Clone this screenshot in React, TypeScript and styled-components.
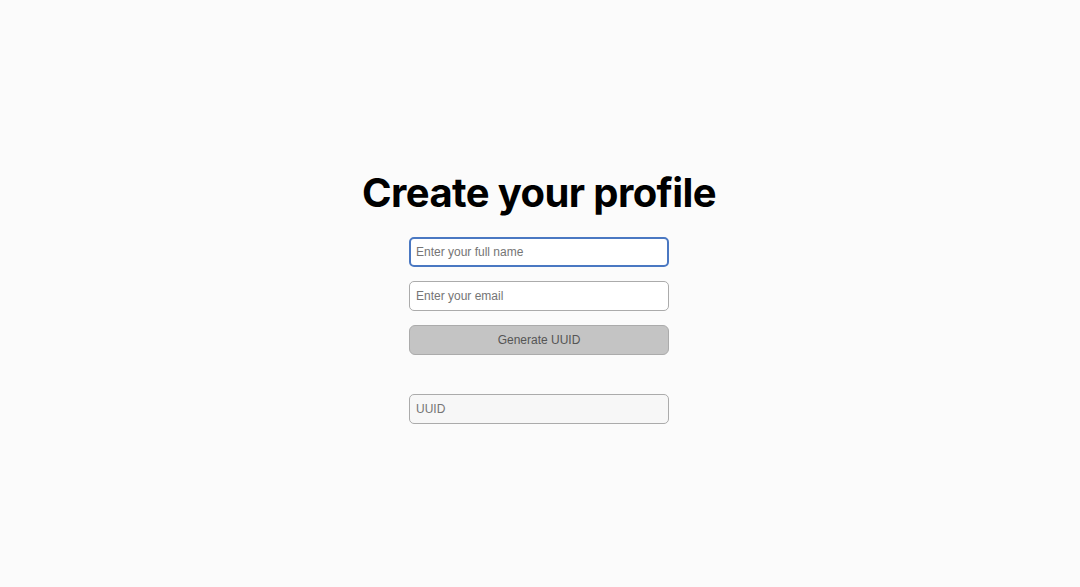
import React from 'react';
import styled, { createGlobalStyle } from 'styled-components';

const GlobalStyle = createGlobalStyle`
  html, body {
    margin: 0;
    padding: 0;
    background: #fbfbfb;
  }
`;

const Page = styled.main`
  display: flex;
  flex-direction: column;
  align-items: center;

  width: 100%;
  height: 587px;
  padding: 169px 2px 0 0;
  box-sizing: border-box;
`;

const Title = styled.h1`
  margin: 0 0 20px;

  font-family: Inter, 'Noto Sans', sans-serif;
  font-weight: 700;
  font-size: 40px;
  letter-spacing: -0.6px;
  line-height: 48px;
  color: #000;
`;

const Form = styled.div`
  display: flex;
  flex-direction: column;
  gap: 14px;

  width: 260px;
`;

const Field = styled.input<{ $focused?: boolean }>`
  width: 100%;
  height: 30px;
  padding: 0 6px;
  box-sizing: border-box;

  border: 1px solid #ababab;
  border-radius: 5px;
  background: ${({ readOnly }) => (readOnly ? '#f7f7f7' : '#fff')};
  outline: none;

  font-family: 'Liberation Sans', Arial, sans-serif;
  font-size: 12px;
  color: #222;

  ${({ $focused }) =>
    $focused &&
    `
    border: 2px solid #4a78c2;
    padding: 0 5px;
  `}

  ::placeholder {
    color: #666;
  }
`;

const GenerateButton = styled.button`
  width: 100%;
  height: 30px;

  border: 1px solid #ababab;
  border-radius: 6px;
  background: #c4c4c4;

  font-family: 'Liberation Sans', Arial, sans-serif;
  font-size: 12px;
  color: #555;
`;

const Spacer = styled.div`
  height: 11px;
`;

const App = () => (
  <>
    <GlobalStyle />
    <Page>
      <Title>Create your profile</Title>
      <Form>
        <Field $focused placeholder="Enter your full name" />
        <Field type="email" placeholder="Enter your email" />
        <GenerateButton disabled>Generate UUID</GenerateButton>
        <Spacer />
        <Field readOnly placeholder="UUID" />
      </Form>
    </Page>
  </>
);

export default App;
